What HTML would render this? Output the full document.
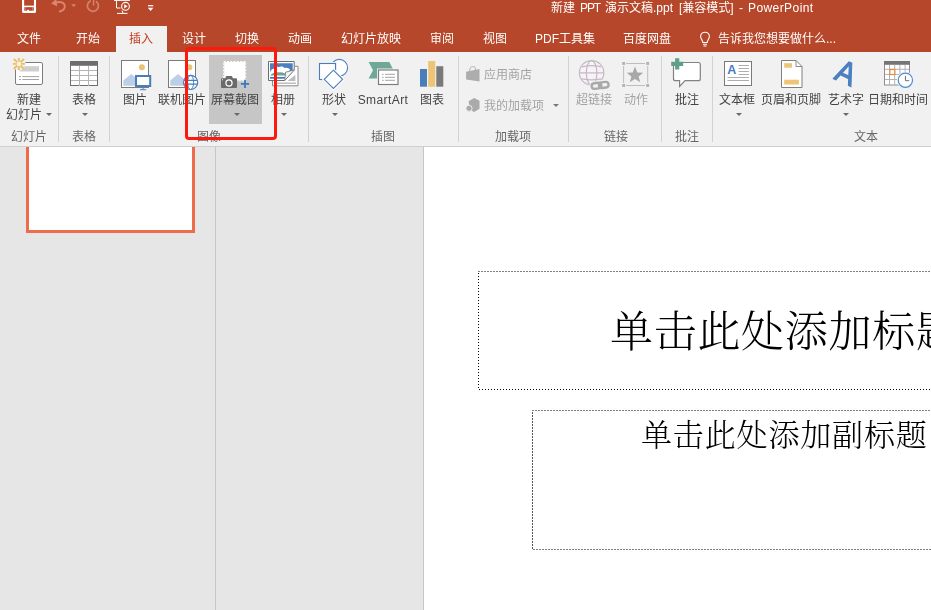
<!DOCTYPE html>
<html lang="zh-CN"><head><meta charset="utf-8"><title>PowerPoint</title>
<style>
html,body{margin:0;padding:0}
body{width:931px;height:610px;overflow:hidden;position:relative;background:#e6e6e6;font-family:"Liberation Sans","Noto Sans CJK SC",sans-serif;font-size:12px;color:#444}
#top{position:absolute;left:0;top:0;width:931px;height:52px;background:#b7472a}
#ribbon{position:absolute;left:0;top:52px;width:931px;height:94px;background:#f1f1f1;border-bottom:1px solid #d0d0d0}
.t{position:absolute;white-space:nowrap;line-height:14px;height:14px;transform:translateX(-50%);text-align:center}
.tl{position:absolute;white-space:nowrap;line-height:14px;height:14px}
.t,.tl{will-change:transform}
.tab{color:#fff}
.gl{color:#666}
.dis{color:#a3a3a3}
.sep{position:absolute;top:56px;width:1px;height:86px;background:#d2d2d2}
.arr{position:absolute;width:0;height:0;border-left:3px solid transparent;border-right:3px solid transparent;border-top:3px solid #6a6a6a;transform:translateX(-3px)}
svg{position:absolute;left:0;top:0;overflow:visible}
</style></head><body>
<div id="top"></div>
<div id="ribbon"></div>
<!-- active tab -->
<div style="position:absolute;left:116px;top:26px;width:51px;height:27px;background:#f1f1f1"></div>
<!-- title -->
<div class="tl tab" id="ti1" style="left:551px;top:1px">新建</div>
<div class="tl tab" id="ti2" style="left:580px;top:1px;letter-spacing:-1.1px">PPT</div>
<div class="tl tab" id="ti3" style="left:605px;top:1px">演示文稿.ppt</div>
<div class="tl tab" id="ti4" style="left:679px;top:1px">[兼容模式]</div>
<div class="tl tab" id="ti5" style="left:739px;top:1px">-</div>
<div class="tl tab" id="ti6" style="left:748px;top:1px;letter-spacing:0.42px">PowerPoint</div>
<!-- tabs -->
<div class="t tab" style="left:29px;top:32px">文件</div>
<div class="t tab" style="left:88px;top:32px">开始</div>
<div class="t" style="left:141px;top:32px;color:#c43e1c">插入</div>
<div class="t tab" style="left:194px;top:32px">设计</div>
<div class="t tab" style="left:247px;top:32px">切换</div>
<div class="t tab" style="left:300px;top:32px">动画</div>
<div class="t tab" style="left:371px;top:32px">幻灯片放映</div>
<div class="t tab" style="left:442px;top:32px">审阅</div>
<div class="t tab" style="left:495px;top:32px">视图</div>
<div class="t tab" id="pdf" style="left:565px;top:32px">PDF工具集</div>
<div class="t tab" style="left:647px;top:32px">百度网盘</div>
<div class="tl tab" style="left:718px;top:32px">告诉我您想要做什么...</div>

<!-- highlight button -->
<div style="position:absolute;left:209px;top:55px;width:53px;height:69px;background:#c6c6c6"></div>

<!-- ICONS-START -->
<svg width="931" height="150" viewBox="0 0 931 150" shape-rendering="auto">
<!-- QAT -->
<g fill="none" stroke="#fff">
 <rect x="23.100" y="-4" width="11.900" height="15.900" stroke-width="2.100" rx="0.500"/>
 <path d="M24 6.400H34" stroke-width="1.500"/>
 <path d="M25.100 7V11.500M32.900 7V11.500" stroke-width="0.800" stroke-opacity="0.550"/>
 <rect x="27.100" y="9.800" width="1.900" height="2" fill="#fff" stroke="none"/>
</g>
<g fill="none" stroke="#d98670" stroke-width="1.900" stroke-linecap="round">
 <path d="M51.200 3.500L56.300 -1.200L57.200 6.600Z" fill="#d98670" stroke="none"/>
 <path d="M55.500 2.700C60 0.800 64.800 2.800 64.800 6.300C64.800 8.900 62.600 10.800 59.700 11.500"/>
 <path d="M71.300 4.200h4.800l-2.400 2.900z" fill="#d98670" stroke="none"/>
 <path d="M90.300 1A5.500 5.500 0 1 0 96.500 1.600" stroke="#d18570" stroke-width="1.700"/>
 <path d="M93.600 -1V5" stroke="#d18570" stroke-width="1.500"/>
</g>
<g fill="none" stroke="#fff" stroke-width="1">
 <path d="M114 0.2H130" stroke-width="1.4"/>
 <path d="M116.5 0V8H120.5"/>
 <circle cx="125.5" cy="6.3" r="3.9" stroke-width="1.1"/>
 <path d="M124.2 4.2L127.6 6.3L124.2 8.4Z" fill="#fff" stroke="none"/>
 <path d="M117 13.4H127.5M122 10.5L123 13"/>
 <path d="M148 5.7H153.2" stroke-width="1.2"/>
 <path d="M147.8 7.8h5.6l-2.8 3.2z" fill="#fff" stroke="none"/>
</g>
<!-- lightbulb -->
<g fill="none" stroke="#fff" stroke-width="1.1">
 <path d="M702.8 42.5C702.8 40 700.6 39.3 700.6 36.6A4.4 4.4 0 0 1 709.4 36.6C709.4 39.3 707.2 40 707.2 42.5Z"/>
 <path d="M703 44.3H707M703.5 46H706.5"/>
</g>

<!-- new slide -->
<rect x="15.5" y="62.5" width="27" height="22" rx="1.5" fill="#fff" stroke="#7d7d7d"/>
<rect x="19.5" y="66.2" width="19.5" height="5.3" fill="#cfcfcf"/>
<path d="M19 76.6h2M22.3 76.6H39M19 79.5h2M22.3 79.5H39" stroke="#9a9a9a" stroke-width="0.9"/>
<g stroke="#f1f1f1" stroke-width="4.200" stroke-linecap="butt">
 <path d="M18.900 57.400V70.400M12.400 63.900H25.400M14.400 59.400L23.400 68.400M23.400 59.400L14.400 68.400"/>
</g>
<g stroke="#ecbd62" stroke-width="1.900" stroke-linecap="butt">
 <path d="M18.900 57.900V69.900M12.900 63.900H24.900M13.800 58.800L24 69M24 58.800L13.800 69"/>
</g>
<circle cx="18.900" cy="63.900" r="2.300" fill="#f7f4ee"/>
<!-- table -->
<rect x="70.5" y="61.5" width="27" height="24" fill="#fff" stroke="#6e6e6e"/>
<rect x="70" y="61" width="28" height="4.8" fill="#6e6e6e"/>
<path d="M79.5 66V86M88.5 66V86M71 70.5H97M71 75.5H97M71 80.5H97" stroke="#b4b4b4" stroke-width="1"/>
<!-- picture -->
<rect x="121.500" y="60.500" width="27" height="27" fill="#fff" stroke="#7a7a7a"/>
<circle cx="141.900" cy="67.200" r="3" fill="#eac37a"/>
<path d="M123.300 85.700V80.400L131.300 73.900L137 78.500V85.700Z" fill="#bccfe6"/>
<rect x="136" y="76" width="14.200" height="10" fill="#fff" stroke="#4a7ebb" stroke-width="2"/>
<path d="M143.100 87V89.200M140 89.700H146.200" stroke="#4a7ebb" stroke-width="1"/>
<!-- online picture -->
<rect x="168.500" y="60.500" width="27" height="27" fill="#fff" stroke="#7a7a7a"/>
<circle cx="189.400" cy="67.200" r="3" fill="#eac37a"/>
<path d="M170.300 85.700V80.400L178 73.900L186 80.500V85.700Z" fill="#bccfe6"/>
<g fill="none" stroke="#4a7ebb" stroke-width="1.200">
 <circle cx="190.600" cy="82.400" r="7.100" fill="#fff"/>
 <ellipse cx="190.600" cy="82.400" rx="3" ry="7.100" stroke-width="1"/>
 <path d="M184 80.300H197.200M184 84.200H197.200" stroke-width="1.300"/>
</g>
<!-- screenshot -->
<rect x="224.200" y="62" width="21" height="18.300" fill="#fff"/>
<rect x="223.700" y="61.500" width="22" height="19.300" fill="none" stroke="#fff" stroke-dasharray="2 1.300"/>
<path d="M222 78.300h3.200l1-2.400h5.700l1 2.400H236Q237 78.300 237 79.300V86.900Q237 87.900 236 87.900H222Q221 87.900 221 86.900V79.300Q221 78.300 222 78.300Z" fill="#6b6b6b"/>
<circle cx="229" cy="83" r="3.100" fill="#6b6b6b" stroke="#fff" stroke-width="1.200"/>
<rect x="222" y="79.300" width="1" height="1" fill="#fff"/>
<path d="M245 79.800V88M240.900 83.900H249.100" stroke="#3c78c2" stroke-width="1.800"/>
<!-- album -->
<path d="M272.500 81V85.800H298V66.300H294.500" fill="#fff" stroke="#8a8a8a"/>
<rect x="275.500" y="82.500" width="20.500" height="1.400" fill="#b9b9b9"/>
<path d="M295.400 74.800V81H287.500Z" fill="#bcbcbc"/>
<path d="M268.500 61.500H294.200V69.800L284.700 80.500H268.500Z" fill="#fff" stroke="#6e6e6e"/>
<path d="M270 63.200H292.700V70.500L286 77.500 284.500 72H270Z" fill="#4a7fc0"/>
<path d="M270 72C271 69.500 272.500 68.500 273.500 69C274.500 66.800 277 66.300 278.500 67.300C280.500 65.800 283.500 66.300 284.500 68C287 67.300 289.500 68.300 290 70L288 73.500H270Z" fill="#fff"/>
<path d="M270 75.500C272.500 73 276 71.800 279 72.500C281.500 71.800 284 72.800 286 74.500L285 75.500Z" fill="#69a58f"/>
<rect x="270" y="77" width="14.800" height="1.700" fill="#3f76c0"/>
<path d="M294.500 69.800L284.700 80.500L285.600 72.200Z" fill="#f4f4f4" stroke="#6e6e6e" stroke-width="0.800" stroke-linejoin="round"/>
<!-- shapes -->
<g fill="#fff" stroke="#4a7ebb" stroke-width="1.100">
 <circle cx="339.300" cy="67.700" r="8.300"/>
 <rect x="319.500" y="63.500" width="16" height="16" stroke="#f1f1f1" stroke-width="3"/>
 <rect x="319.500" y="63.500" width="16" height="16"/>
 <path d="M333.400 70.200L342.600 79.300L333.400 88.400L324.200 79.300Z" stroke="#fff" stroke-width="3.200"/>
 <path d="M333.400 70.200L342.600 79.300L333.400 88.400L324.200 79.300Z"/>
</g>
<!-- smartart -->
<path d="M368.600 62H389.300L393.600 70.300L389.300 78.600H368.600L373 70.300Z" fill="#6fa896"/>
<rect x="378.500" y="70" width="19.500" height="14.500" fill="#fff" stroke="#f1f1f1" stroke-width="3"/>
<rect x="378.500" y="70" width="19.500" height="14.500" fill="#fff" stroke="#7d7d7d" stroke-width="1.200"/>
<path d="M382 74.300h1.600M385 74.300H395M382 77.300h1.600M385 77.300H395M382 80.300h1.600M385 80.300H395" stroke="#9a9a9a" stroke-width="0.900"/>
<!-- chart -->
<rect x="420" y="69" width="7" height="17.700" fill="#4a7ebb"/>
<rect x="428.200" y="61" width="7" height="25.700" fill="#eec476"/>
<rect x="436.300" y="66.200" width="7" height="20.500" fill="#7a7a7a"/>
<!-- store -->
<path d="M466.100 71.800L479.500 68.900V81.500L466.100 79.500Z" fill="#adadad"/>
<path d="M469.700 71.500C469.300 67.500 472 66 473.200 66.800C475 66 475.600 68 475.400 70" fill="none" stroke="#adadad" stroke-width="1"/>
<!-- my addins -->
<path d="M468.600 101.200L474.200 98L479.500 100.800V108.700L474.200 112L470 110Z" fill="#aaa"/>
<circle cx="469" cy="108.300" r="3.100" fill="#aaa" stroke="#f1f1f1" stroke-width="0.900"/>
<!-- hyperlink -->
<g fill="none" stroke="#c3bac3" stroke-width="1.200">
 <circle cx="591.600" cy="72.800" r="12.200" fill="#f8f2f8"/>
 <ellipse cx="591.600" cy="72.800" rx="5.300" ry="12.200"/>
 <path d="M579.400 72.800H603.800M582 66.800Q591.600 64.500 601.200 66.800M582 78.800Q591.600 81.100 601.200 78.800"/>
</g>
<g transform="rotate(-7 600 85.300)">
<g fill="none" stroke="#f1f1f1" stroke-width="4.600"><rect x="591.600" y="82.600" width="9.600" height="5.600" rx="2.800"/><rect x="599" y="82.600" width="9.600" height="5.600" rx="2.800"/></g>
<g fill="none" stroke="#a9a9a9" stroke-width="2.400"><rect x="591.600" y="82.600" width="9.600" height="5.600" rx="2.800"/><rect x="599" y="82.600" width="9.600" height="5.600" rx="2.800"/></g>
</g>
<!-- action -->
<path d="M626.200 63.500H645M626.200 85.500H645M623.600 66V83M647.700 66V83" fill="none" stroke="#bdbdbd" stroke-width="1"/>
<g fill="#b2b2b2"><rect x="622.200" y="62" width="2.900" height="2.900"/><rect x="646.200" y="62" width="2.900" height="2.900"/><rect x="622.200" y="84" width="2.900" height="2.900"/><rect x="646.200" y="84" width="2.900" height="2.900"/></g>
<path d="M635 66.600L637.300 72.500L643.200 72.800L638.600 76.600L640.200 82.300L635 79L629.800 82.300L631.400 76.600L626.800 72.800L632.700 72.500Z" fill="#a9a7a9"/>
<!-- comment -->
<path d="M675.500 62.500H698.300Q700.300 62.500 700.300 64.500V78.700Q700.300 80.700 698.300 80.700H685L679.600 86.500V80.700H675.500Q673.500 80.700 673.500 78.700V64.500Q673.500 62.500 675.500 62.500Z" fill="#fff" stroke="#828282" stroke-width="1.200"/>
<path d="M677.200 58.200V69.600M671.200 63.900H683.200" stroke="#5f9f89" stroke-width="4.200"/>
<!-- textbox -->
<rect x="724.500" y="61.500" width="27" height="24" fill="#fff" stroke="#7a7a7a"/>
<text x="727.300" y="74.300" font-family="Liberation Sans, sans-serif" font-weight="bold" font-size="12.500" fill="#4a7ebb">A</text>
<path d="M738.500 65.500H749M738.500 68.500H749M738.500 71.500H749M738.500 74.500H749M727.500 77.500H749M727.500 80.500H749" stroke="#a5a5a5" stroke-width="0.900"/>
<!-- header footer -->
<path d="M781.500 60.500H796L802 66.500V87.500H781.500Z" fill="#fff" stroke="#7f7f7f"/>
<path d="M796 60.500V66.500H802" fill="none" stroke="#8a8a8a"/>
<rect x="784.200" y="63.200" width="7.800" height="4.500" fill="#eec476"/>
<rect x="784.200" y="79.700" width="14.700" height="4.800" fill="#eec476"/>
<!-- wordart -->
<text x="0" y="0" font-family="Liberation Sans, sans-serif" font-size="10" fill="#4a80c0" stroke="#4a80c0" stroke-width="0.360" transform="matrix(2.66 1.22 -1.193 2.927 833.300 78.400)">A</text>
<!-- datetime -->
<rect x="884.500" y="61.500" width="25" height="23.500" fill="#fff" stroke="#8e8e8e"/>
<rect x="884" y="61" width="26" height="3.800" fill="#757575"/>
<path d="M889.500 65V85M894.700 65V85M899.900 65V85M905.100 65V85M885 69.300H909M885 74.400H909M885 79.500H909" stroke="#b2b2b2" stroke-width="1"/>
<rect x="889.800" y="69.500" width="5" height="5" fill="#fff" stroke="#e58a3c" stroke-width="1.200"/>
<circle cx="905.400" cy="80.200" r="7.300" fill="#fff" stroke="#f1f1f1" stroke-width="2.600"/>
<circle cx="905.400" cy="80.200" r="7.100" fill="#fff" stroke="#4f8ad2" stroke-width="1.200"/>
<path d="M905.400 75.800V80.700H909.200" fill="none" stroke="#6e6e6e" stroke-width="1"/>
</svg>
<!-- ICONS-END -->

<!-- ribbon labels -->
<div class="t" style="left:29px;top:93px">新建</div>
<div class="t" style="left:24px;top:108px">幻灯片</div>
<div class="arr" style="left:49px;top:113px"></div>
<div class="t gl" style="left:29px;top:130px">幻灯片</div>
<div class="sep" style="left:58px"></div>
<div class="t" style="left:84px;top:93px">表格</div>
<div class="arr" style="left:85px;top:113px"></div>
<div class="t gl" style="left:84px;top:130px">表格</div>
<div class="sep" style="left:109px"></div>
<div class="t" style="left:135px;top:93px">图片</div>
<div class="t" style="left:182px;top:93px">联机图片</div>
<div class="t" style="left:235px;top:93px">屏幕截图</div>
<div class="arr" style="left:237px;top:113px"></div>
<div class="t" style="left:283px;top:93px">相册</div>
<div class="arr" style="left:284px;top:113px"></div>
<div class="t gl" style="left:209px;top:130px">图像</div>
<div class="sep" style="left:308px"></div>
<div class="t" style="left:334px;top:93px">形状</div>
<div class="arr" style="left:335px;top:113px"></div>
<div class="t" id="sma" style="left:383px;top:93px;letter-spacing:0.42px">SmartArt</div>
<div class="t" style="left:432px;top:93px">图表</div>
<div class="t gl" style="left:383px;top:130px">插图</div>
<div class="sep" style="left:458px"></div>
<div class="tl dis" style="left:484px;top:68px">应用商店</div>
<div class="tl dis" style="left:484px;top:99px">我的加载项</div>
<div class="arr" style="left:556px;top:104px;border-top-color:#777"></div>
<div class="t gl" style="left:513px;top:130px">加载项</div>
<div class="sep" style="left:568px"></div>
<div class="t dis" style="left:594px;top:93px">超链接</div>
<div class="t dis" style="left:636px;top:93px">动作</div>
<div class="t gl" style="left:616px;top:130px">链接</div>
<div class="sep" style="left:661px"></div>
<div class="t" style="left:687px;top:93px">批注</div>
<div class="t gl" style="left:687px;top:130px">批注</div>
<div class="sep" style="left:712px"></div>
<div class="t" style="left:737px;top:93px">文本框</div>
<div class="arr" style="left:739px;top:113px"></div>
<div class="t" style="left:791px;top:93px">页眉和页脚</div>
<div class="t" style="left:846px;top:93px">艺术字</div>
<div class="arr" style="left:846px;top:113px"></div>
<div class="t" style="left:898px;top:93px">日期和时间</div>
<div class="t gl" style="left:866px;top:130px">文本</div>

<!-- red highlight box -->
<div style="position:absolute;left:185px;top:47px;width:86px;height:87px;border:3px solid #fb1a0c;border-radius:4px"></div>

<!-- workspace -->
<div style="position:absolute;left:215px;top:147px;width:1px;height:463px;background:#c6c6c6"></div>
<div style="position:absolute;left:26px;top:147px;width:163px;height:83px;background:#fff;border:3px solid #ed6c4c;border-top:none"></div>
<div style="position:absolute;left:424px;top:147px;width:507px;height:463px;background:#fff"></div>
<div style="position:absolute;left:423px;top:147px;width:1px;height:463px;background:#c6c6c6"></div>
<div style="position:absolute;left:478px;top:271px;width:453px;height:1px;background:repeating-linear-gradient(to right,#7f7f7f 0,#7f7f7f 2px,transparent 2px,transparent 3px)"></div>
<div style="position:absolute;left:478px;top:273px;width:1px;height:116px;background:repeating-linear-gradient(to bottom,#000 0,#000 1px,transparent 1px,transparent 3px)"></div>
<div style="position:absolute;left:479px;top:389px;width:452px;height:1px;background:repeating-linear-gradient(to right,#000 0,#000 1px,transparent 1px,transparent 3px)"></div>
<div style="position:absolute;left:532px;top:410px;width:399px;height:1px;background:repeating-linear-gradient(to right,#7f7f7f 0,#7f7f7f 2px,transparent 2px,transparent 3px)"></div>
<div style="position:absolute;left:532px;top:412px;width:1px;height:137px;background:repeating-linear-gradient(to bottom,#555 0,#555 2px,transparent 2px,transparent 3px)"></div>
<div style="position:absolute;left:533px;top:549px;width:398px;height:1px;background:repeating-linear-gradient(to right,#7f7f7f 0,#7f7f7f 2px,transparent 2px,transparent 3px)"></div>
<div class="tl" style="left:610px;top:303px;font-family:'Liberation Serif','Noto Serif CJK SC',serif;font-size:43px;line-height:60px;height:60px;color:#000;font-weight:300;letter-spacing:0.7px">单击此处添加标题</div>
<div class="tl" style="left:641px;top:415.5px;font-family:'Liberation Serif','Noto Serif CJK SC',serif;font-size:31px;line-height:40px;height:40px;color:#000;letter-spacing:0.85px;font-weight:300">单击此处添加副标题</div>
</body></html>
